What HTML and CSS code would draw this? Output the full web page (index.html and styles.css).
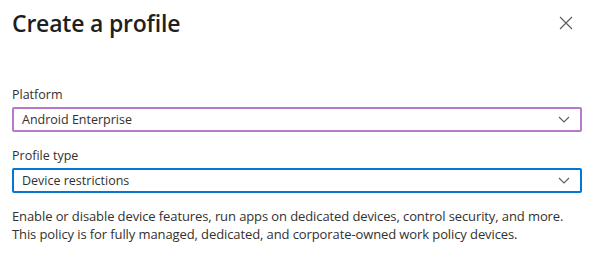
FILE: index.html
```html
<!DOCTYPE html>
<html>
<head>
<meta charset="utf-8">
<link rel="stylesheet" href="styles.css">
</head>
<body>
<div class="panel">
  <div class="header">
    <h1 class="title">Create a profile</h1>
    <button class="close" aria-label="Close">
      <svg width="14" height="14" viewBox="0 0 14 14"><path d="M1 1L13 13M13 1L1 13" stroke="#605e5c" stroke-width="1.2" fill="none"/></svg>
    </button>
  </div>
  <div class="field field-first">
    <label class="label">Platform</label>
    <div class="select select-purple">
      <span class="value">Android Enterprise</span>
      <svg class="chev" width="12" height="7" viewBox="0 0 12 7"><path d="M1 1L6 6L11 1" stroke="#605e5c" stroke-width="1.1" fill="none"/></svg>
    </div>
  </div>
  <div class="field field-second">
    <label class="label">Profile type</label>
    <div class="select select-blue">
      <span class="value">Device restrictions</span>
      <svg class="chev" width="12" height="7" viewBox="0 0 12 7"><path d="M1 1L6 6L11 1" stroke="#605e5c" stroke-width="1.1" fill="none"/></svg>
    </div>
  </div>
  <p class="desc">Enable or disable device features, run apps on dedicated devices, control security, and more.<br>This policy is for fully managed, dedicated, and corporate-owned work policy devices.</p>
</div>
</body>
</html>
```
FILE: styles.css
```css
html, body {
  margin: 0;
  padding: 0;
  background: #fff;
}
body {
  font-family: "Open Sans", "Noto Sans", sans-serif;
  color: #323130;
  width: 600px;
  height: 266px;
  overflow: hidden;
}
.panel {
  padding: 0 18px 0 12px;
}
.header {
  display: flex;
  justify-content: space-between;
  align-items: center;
  height: 46px;
}
.title {
  margin: 0;
  font-size: 23px;
  font-weight: 600;
  letter-spacing: -0.2px;
  color: #201f1e;
}
.close {
  border: 0;
  background: none;
  padding: 0;
  margin-right: 9px;
  width: 14px;
  height: 14px;
  display: flex;
}
.field {
  display: flex;
  flex-direction: column;
}
.field-first {
  margin-top: 40px;
}
.field-second {
  margin-top: 15px;
}
.label {
  font-size: 12.5px;
  line-height: 18px;
  margin-bottom: 3px;
}
.select {
  box-sizing: border-box;
  height: 25px;
  border-radius: 2px;
  display: flex;
  align-items: center;
  justify-content: space-between;
  padding: 0 10px 0 8px;
  font-size: 12.5px;
}
.select-purple {
  border: 2px solid #b47cc7;
}
.select-blue {
  border: 2px solid #0078d4;
}
.desc {
  margin: 14px 0 0;
  font-size: 13px;
  line-height: 18px;
  letter-spacing: -0.1px;
  white-space: nowrap;
}
```
